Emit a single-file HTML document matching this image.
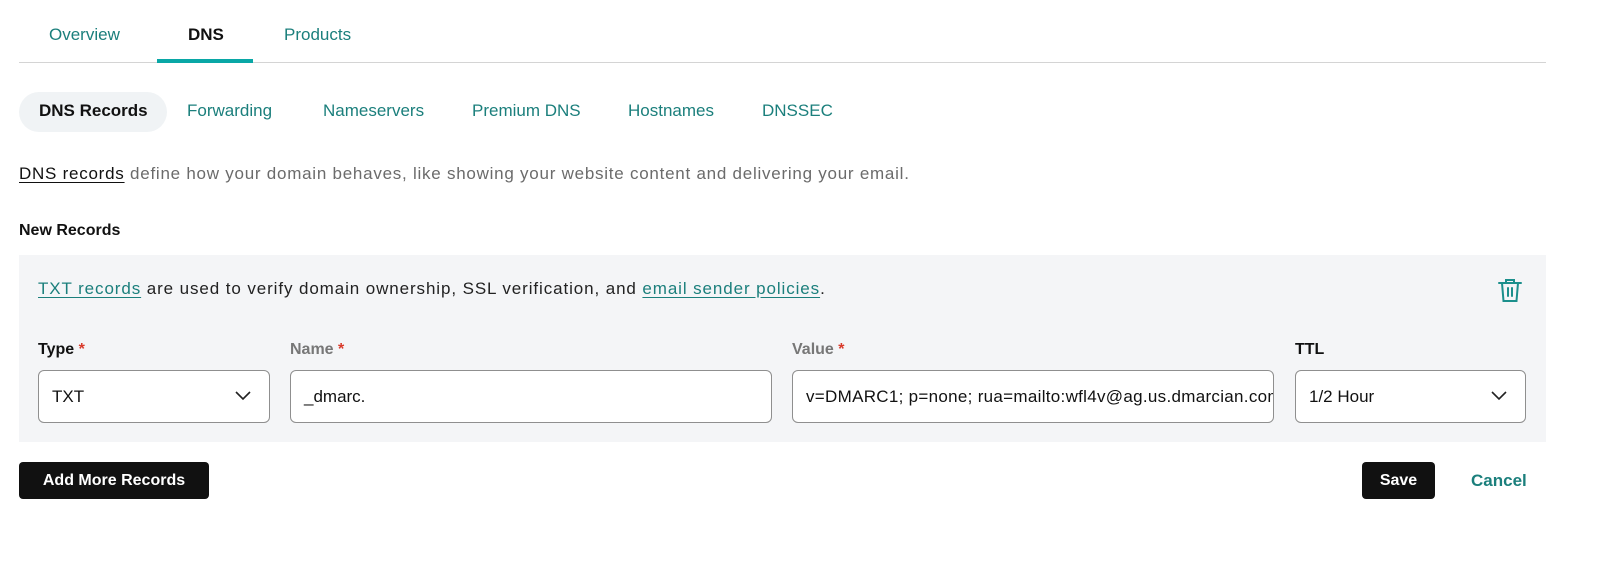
<!DOCTYPE html>
<html><head><meta charset="utf-8"><style>
*{box-sizing:border-box;margin:0;padding:0}
body{width:1600px;height:587px;background:#fff;font-family:"Liberation Sans",sans-serif;color:#111;position:relative;overflow:hidden}
.a{position:absolute;white-space:nowrap}
.teal{color:#1b7f7c}
.tab{font-size:17px;top:25px}
.sub{font-size:17px;top:101px}
.lbl{font-size:16px;font-weight:bold;top:341px}
.in{position:absolute;top:370px;height:53px;background:#fff;border:1px solid #8f8f8f;border-radius:6px;font-size:17px;padding:16px 13px;white-space:nowrap;overflow:hidden}
.chev{position:absolute;right:18px;top:20px}
.btn{position:absolute;top:462px;height:37px;background:#111;color:#fff;border-radius:4px;font-size:16px;font-weight:bold;text-align:center;line-height:37px}
u{text-underline-offset:3px}
</style></head><body>
<div class="a tab teal" style="left:49px">Overview</div>
<div class="a tab" style="left:188px;font-weight:bold">DNS</div>
<div class="a tab teal" style="left:284px">Products</div>
<div class="a" style="left:19px;top:62px;width:1527px;height:1px;background:#d4d4d4"></div>
<div class="a" style="left:157px;top:59px;width:96px;height:4px;background:#09a7a6"></div>

<div class="a" style="left:19px;top:92px;width:148px;height:40px;border-radius:20px;background:#f0f3f5"></div>
<div class="a sub" style="left:39px;font-weight:bold">DNS Records</div>
<div class="a sub teal" style="left:187px">Forwarding</div>
<div class="a sub teal" style="left:323px">Nameservers</div>
<div class="a sub teal" style="left:472px">Premium DNS</div>
<div class="a sub teal" style="left:628px">Hostnames</div>
<div class="a sub teal" style="left:762px">DNSSEC</div>

<div class="a" style="left:19px;top:164px;font-size:17px;letter-spacing:0.75px;color:#6b6b6b"><u style="color:#111">DNS records</u> define how your domain behaves, like showing your website content and delivering your email.</div>
<div class="a" style="left:19px;top:222px;font-size:16px;font-weight:bold">New Records</div>

<div class="a" style="left:19px;top:255px;width:1527px;height:187px;background:#f4f5f7"></div>
<div class="a" style="left:38px;top:279px;font-size:17px;letter-spacing:0.9px;color:#222"><u class="teal">TXT records</u> are used to verify domain ownership, SSL verification, and <u class="teal">email sender policies</u>.</div>
<svg class="a" style="left:1498px;top:278px" width="24" height="25" viewBox="0 0 24 25" fill="none" stroke="#1b8f8c" stroke-width="2" stroke-linecap="round"><path d="M1 5h22M8 5V2h8v3M4 5l1.5 18h13L20 5M10 10v8M14 10v8"/></svg>

<div class="a lbl" style="left:38px">Type <span style="color:#d93a2b">*</span></div>
<div class="a lbl" style="left:290px;color:#777">Name <span style="color:#d93a2b">*</span></div>
<div class="a lbl" style="left:792px;color:#777">Value <span style="color:#d93a2b">*</span></div>
<div class="a lbl" style="left:1295px">TTL</div>

<div class="in" style="left:38px;width:232px">TXT<svg class="chev" width="16" height="10" viewBox="0 0 16 10" fill="none" stroke="#222" stroke-width="1.6"><path d="M1 1l7 7 7-7"/></svg></div>
<div class="in" style="left:290px;width:482px">_dmarc.</div>
<div class="in" style="left:792px;width:482px;letter-spacing:0.3px">v=DMARC1; p=none; rua=mailto:wfl4v@ag.us.dmarcian.com</div>
<div class="in" style="left:1295px;width:231px">1/2 Hour<svg class="chev" width="16" height="10" viewBox="0 0 16 10" fill="none" stroke="#222" stroke-width="1.6"><path d="M1 1l7 7 7-7"/></svg></div>

<div class="btn" style="left:19px;width:190px">Add More Records</div>
<div class="btn" style="left:1362px;width:73px">Save</div>
<div class="a teal" style="left:1471px;top:471px;font-size:17px;font-weight:bold">Cancel</div>
</body></html>
